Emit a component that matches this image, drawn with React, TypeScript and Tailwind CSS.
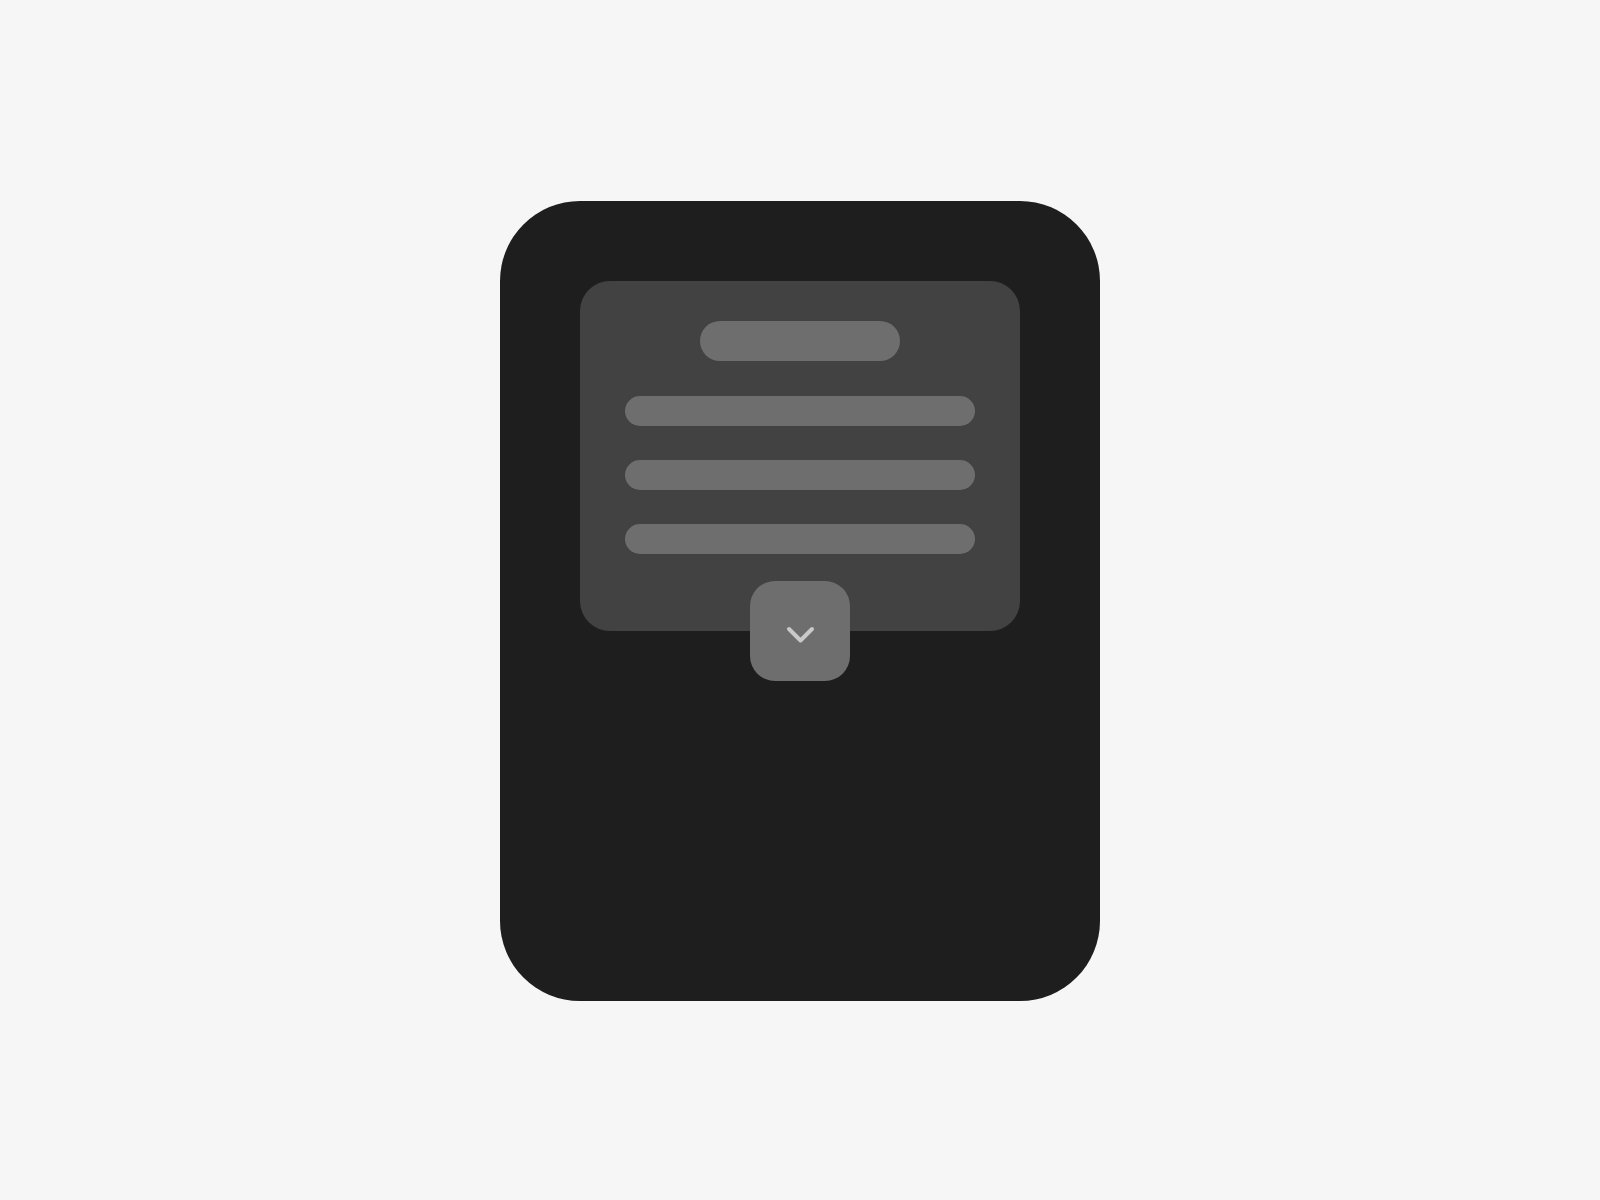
export default function App() {
  return (
    <div className="flex min-h-screen items-center justify-center bg-[#f7f6f7]">
      {/* outer device frame */}
      <div className="mt-[2px] h-[800px] w-[600px] rounded-[80px] bg-[#1e1e1e] p-20">
        {/* collapsed card with skeleton rows */}
        <div className="relative rounded-[30px] bg-[#424242] px-[45px] pb-[77px] pt-10">
          <div className="mx-auto h-10 w-[200px] rounded-full bg-[#6e6e6e]" />
          <div className="mt-[35px] flex flex-col gap-[34px]">
            <div className="h-[30px] rounded-full bg-[#6e6e6e]" />
            <div className="h-[30px] rounded-full bg-[#6e6e6e]" />
            <div className="h-[30px] rounded-full bg-[#6e6e6e]" />
          </div>

          {/* expand toggle sitting on the bottom edge */}
          <button
            type="button"
            aria-label="Expand"
            className="absolute bottom-0 left-1/2 flex h-[100px] w-[100px] -translate-x-1/2 translate-y-1/2 items-center justify-center rounded-[25px] bg-[#6e6e6e]"
          >
            <svg width="30" height="20" viewBox="0 0 30 20" className="mt-[8px]" fill="none">
              <polyline
                points="4,4 15.5,15.5 27,4"
                stroke="#c9c9c9"
                strokeWidth="4"
                strokeLinecap="round"
                strokeLinejoin="round"
              />
            </svg>
          </button>
        </div>
      </div>
    </div>
  );
}
